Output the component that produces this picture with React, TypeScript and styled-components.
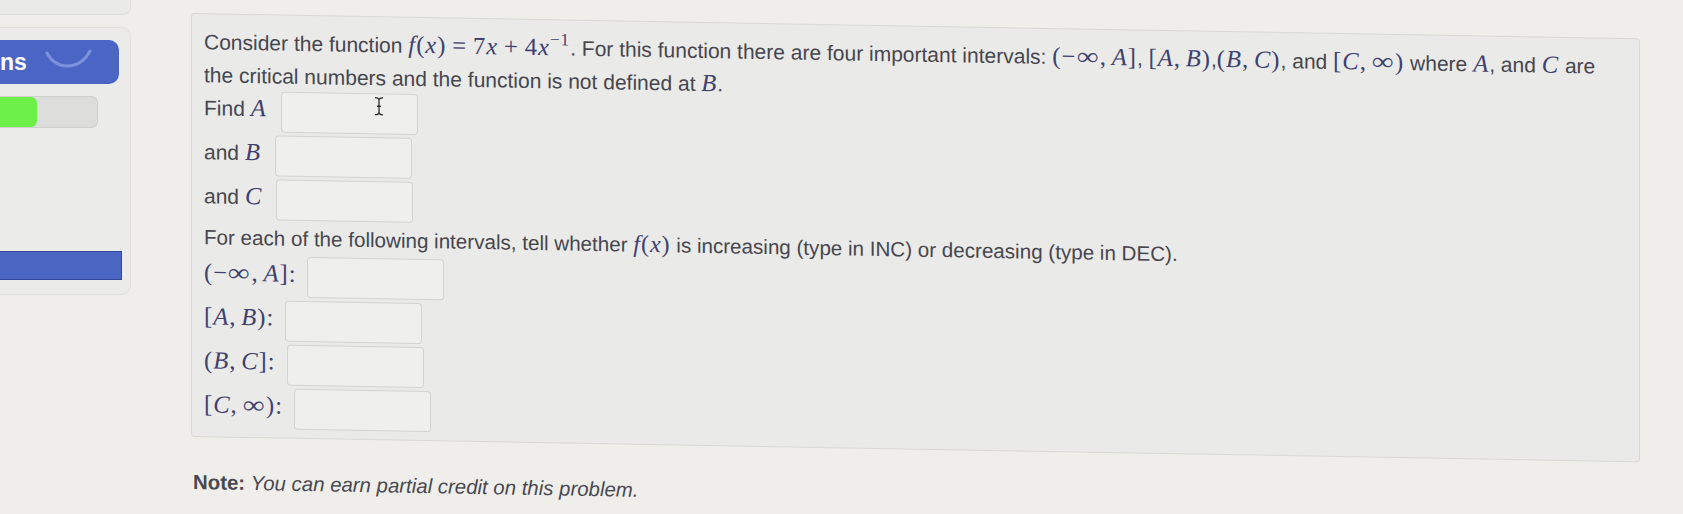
import React from 'react'
import styled, { createGlobalStyle } from 'styled-components'

const GlobalStyle = createGlobalStyle`
  html, body {
    margin: 0;
    padding: 0;
    background: #efeeea;
  }
  body {
    font-family: "Liberation Sans", Arial, sans-serif;
    color: #46464f;
  }
`

const Page = styled.div`
  display: flex;
  align-items: flex-start;
  width: 1683px;
  height: 514px;
  overflow: hidden;
`

const Sidebar = styled.aside`
  flex: none;
  width: 131px;
  display: flex;
  flex-direction: column;
  gap: 12px;
`

const TopCard = styled.div`
  height: 15px;
  background: #eaeae8;
  border-right: 1px solid #dcdcd9;
  border-bottom: 1px solid #dcdcd9;
  border-bottom-right-radius: 8px;
  box-sizing: border-box;
`

const NavCard = styled.div`
  height: 268px;
  box-sizing: border-box;
  background: #ebebe9;
  border: 1px solid #dededb;
  border-left: none;
  border-radius: 0 10px 10px 0;
  padding-top: 12px;
  display: flex;
  flex-direction: column;
`

const NavButton = styled.div`
  position: relative;
  width: 119px;
  height: 44px;
  background: #4a65c4;
  border-radius: 0 10px 10px 0;
  color: #ffffff;
  font-weight: 700;
  font-size: 23px;
  display: flex;
  align-items: center;
`

const Glare = styled.svg`
  position: absolute;
  left: 45px;
  top: 8px;
`

const Progress = styled.div`
  margin-top: 12px;
  width: 98px;
  height: 32px;
  box-sizing: border-box;
  background: #dddddb;
  border: 1px solid #cfcfcc;
  border-left: none;
  border-radius: 0 7px 7px 0;
  overflow: hidden;
`

const ProgressFill = styled.div`
  height: 100%;
  background: #6cf048;
  border-radius: 0 6px 6px 0;
`

const BlueBar = styled.div`
  margin-top: 123px;
  width: 122px;
  height: 29px;
  box-sizing: border-box;
  background: #4a66c2;
  border: 1px solid #33489a;
  border-left: none;
`

const Main = styled.main`
  margin-left: 60px;
  margin-top: 13px;
  width: 1449px;
  display: flex;
  flex-direction: column;
`

// the reference is a photo of a screen, slightly tilted
const ProblemBox = styled.section`
  box-sizing: border-box;
  height: 424px;
  background: #eaeae8;
  border: 1px solid #d8d8d5;
  border-radius: 4px;
  padding: 11px 12px 10px 12px;
  font-size: 21px;
  transform: skewY(1deg);
  transform-origin: 0 0;
`

const Para = styled.div<{ $lh: number; $size?: number }>`
  line-height: ${p => p.$lh}px;
  font-size: ${p => (p.$size ? `${p.$size}px` : 'inherit')};
  white-space: nowrap;
`

const AnswerGroup = styled.div<{ $pull?: number }>`
  margin-top: ${p => -(p.$pull ?? 0)}px;
`

const Row = styled.div<{ $gap: number }>`
  display: flex;
  align-items: center;
  height: 44px;
  gap: ${p => p.$gap}px;
`

const Label = styled.span`
  white-space: nowrap;
  line-height: 22px;
  padding-bottom: 6px;
`

const AnswerBox = styled.div`
  position: relative;
  width: 137px;
  height: 41px;
  box-sizing: border-box;
  background: #efefed;
  border: 1px solid #d3d3d0;
  border-radius: 4px;
`

const Cursor = styled.svg`
  position: absolute;
  left: 91px;
  top: 2px;
`

const Math = styled.span`
  font-family: "Liberation Serif", "DejaVu Serif", serif;
  font-size: 1.17em;
  color: #404070;
  letter-spacing: 0.04em;
  white-space: nowrap;

  i {
    font-style: italic;
  }
`

const Op = styled.span`
  margin: 0 0.24em;
`

const Sup = styled.sup`
  font-size: 0.7em;
  vertical-align: 0.6em;
  line-height: 0;
`

const Comma = styled.span`
  margin-right: 0.2em;
`

const Inf = styled.span`
  display: inline-block;
  margin: 0 0.1em;
  transform: scaleX(1.25);
`

const Note = styled.p`
  align-self: flex-start;
  margin: 30px 0 0 2px;
  font-size: 20.4px;
  line-height: 30px;
  color: #484850;
  transform: skewY(1deg);
  transform-origin: 0 0;

  b {
    font-weight: 700;
  }
  em {
    font-style: italic;
  }
`

type IntervalProps = { open: string; a: React.ReactNode; b: React.ReactNode; close: string; colon?: boolean }

const Interval: React.FC<IntervalProps> = ({ open, a, b, close, colon }) => (
  <Math>
    {open}{a}<Comma>,</Comma>{b}{close}{colon ? ':' : ''}
  </Math>
)

const negInf = <>−<Inf>∞</Inf></>
const posInf = <Inf>∞</Inf>

const App: React.FC = () => {
  const answers = [
    { label: <>Find <Math><i>A</i></Math></>, cursor: true },
    { label: <>and <Math><i>B</i></Math></>, cursor: false },
    { label: <>and <Math><i>C</i></Math></>, cursor: false },
  ]
  const intervals: IntervalProps[] = [
    { open: '(', a: negInf, b: <i>A</i>, close: ']' },
    { open: '[', a: <i>A</i>, b: <i>B</i>, close: ')' },
    { open: '(', a: <i>B</i>, b: <i>C</i>, close: ']' },
    { open: '[', a: <i>C</i>, b: posInf, close: ')' },
  ]

  return (
    <>
      <GlobalStyle />
      <Page>
        <Sidebar>
          <TopCard />
          <NavCard>
            <NavButton>
              ns
              <Glare width="48" height="26" viewBox="0 0 48 26">
                <path d="M2 5 Q 9 18 22 18 Q 37 18 45 3" fill="none" stroke="rgba(175,190,245,0.5)" strokeWidth="3" strokeLinecap="round" />
              </Glare>
            </NavButton>
            <Progress>
              <ProgressFill style={{ width: '38%' }} />
            </Progress>
            <BlueBar />
          </NavCard>
        </Sidebar>

        <Main>
          <ProblemBox>
            <Para $lh={32}>
              Consider the function{' '}
              <Math>
                <i>f</i>(<i>x</i>)<Op>=</Op>7<i>x</i><Op>+</Op>4<i>x</i><Sup>−1</Sup>
              </Math>
              . For this function there are four important intervals:{' '}
              <Interval open="(" a={negInf} b={<i>A</i>} close="]" />,{' '}
              <Interval open="[" a={<i>A</i>} b={<i>B</i>} close=")" />,
              <Interval open="(" a={<i>B</i>} b={<i>C</i>} close=")" />, and{' '}
              <Interval open="[" a={<i>C</i>} b={posInf} close=")" /> where <Math><i>A</i></Math>, and{' '}
              <Math><i>C</i></Math> are
              <br />
              the critical numbers and the function is not defined at <Math><i>B</i></Math>.
            </Para>

            <AnswerGroup $pull={3}>
              {answers.map((row, i) => (
                <Row key={i} $gap={14}>
                  <Label>{row.label}</Label>
                  <AnswerBox>
                    {row.cursor && (
                      <Cursor width="12" height="20" viewBox="0 0 12 20">
                        <path d="M2 1.5 Q6 1.5 6 4 Q6 1.5 10 1.5 M6 4 V16 M2 18.5 Q6 18.5 6 16 Q6 18.5 10 18.5 M4 10 H8" fill="none" stroke="#2d2d33" strokeWidth="1.3" />
                      </Cursor>
                    )}
                  </AnswerBox>
                </Row>
              ))}
            </AnswerGroup>

            <Para $lh={32} $size={20.6}>
              For each of the following intervals, tell whether{' '}
              <Math><i>f</i>(<i>x</i>)</Math> is increasing (type in INC) or decreasing (type in DEC).
            </Para>

            <AnswerGroup>
              {intervals.map((iv, i) => (
                <Row key={i} $gap={11}>
                  <Label>
                    <Interval {...iv} colon />
                  </Label>
                  <AnswerBox />
                </Row>
              ))}
            </AnswerGroup>
          </ProblemBox>

          <Note>
            <b>Note:</b> <em>You can earn partial credit on this problem.</em>
          </Note>
        </Main>
      </Page>
    </>
  )
}

export default App
